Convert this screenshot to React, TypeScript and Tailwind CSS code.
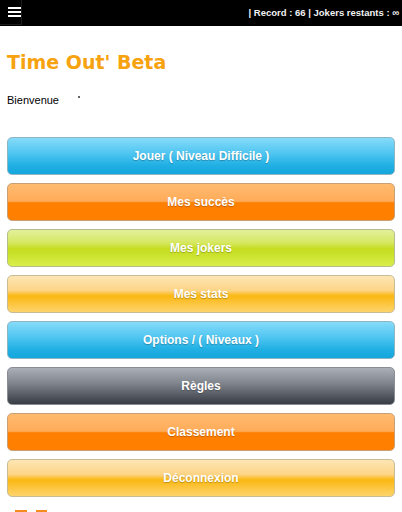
import React from 'react';

const BUTTONS = [
  { label: 'Jouer ( Niveau Difficile )', style: 'bg-[linear-gradient(to_bottom,#86dbf9_0%,#4cc4f0_45%,#22b0e4_75%,#14a6dc_100%)] border-[#8fb4c4]' },
  { label: 'Mes succès', style: 'bg-[linear-gradient(to_bottom,#ffbb70_0%,#ffab58_48%,#ff8000_52%,#ff7f00_100%)] border-[#c8a078]' },
  { label: 'Mes jokers', style: 'bg-[linear-gradient(to_bottom,#e3f09c_0%,#d6e862_35%,#c6dd22_52%,#cbe22e_70%,#d9ef4c_100%)] border-[#b4bc90]' },
  { label: 'Mes stats', style: 'bg-[linear-gradient(to_bottom,#fde6b4_0%,#fdd486_40%,#fab812_55%,#fcc43a_75%,#fdd46c_100%)] border-[#c8bc98]' },
  { label: 'Options / ( Niveaux )', style: 'bg-[linear-gradient(to_bottom,#86dbf9_0%,#4cc4f0_45%,#22b0e4_75%,#14a6dc_100%)] border-[#8fb4c4]' },
  { label: 'Règles', style: 'bg-[linear-gradient(to_bottom,#abafb7_0%,#7d828a_45%,#50555d_80%,#393e46_100%)] border-[#8a8e94]' },
  { label: 'Classement', style: 'bg-[linear-gradient(to_bottom,#ffbb70_0%,#ffab58_48%,#ff8000_52%,#ff7f00_100%)] border-[#c8a078]' },
  { label: 'Déconnexion', style: 'bg-[linear-gradient(to_bottom,#fde6b4_0%,#fdd486_40%,#fab812_55%,#fcc43a_75%,#fdd46c_100%)] border-[#c8bc98]' },
];

export default function App() {
  return (
    <div className="w-[402px] h-[512px] overflow-hidden bg-white font-['Liberation_Sans',Arial,sans-serif]">
      {/* Top bar */}
      <div className="h-[26px] bg-black flex items-center justify-between">
        <div className="w-[22px] h-[25px] self-start border-r border-b border-[#1c1c1c] flex flex-col justify-center gap-[2px] pl-[8px]">
          <div className="w-[13px] h-[2px] bg-white" />
          <div className="w-[13px] h-[2px] bg-white" />
          <div className="w-[13px] h-[2px] bg-white" />
        </div>
        <div className="pr-[3px] text-[9.5px] font-bold text-[#f2f2f2] whitespace-nowrap">
          | Record : 66 | Jokers restants : ∞
        </div>
      </div>

      <div className="px-[7px]">
        <h1 className="mt-[25px] text-[19px] leading-[22px] font-bold text-[#f7a20f] font-['DejaVu_Sans',sans-serif]">
          Time Out' Beta
        </h1>

        <div className="mt-[21px] flex items-start leading-[13px]">
          <span className="text-[11px] text-black">Bienvenue</span>
          <span className="ml-[19px] mt-[2px] w-[2px] h-[2px] bg-[#666]" />
        </div>

        <div className="mt-[30px] flex flex-col gap-[8px]">
          {BUTTONS.map((b) => (
            <button
              key={b.label}
              className={`h-[38px] w-[388px] rounded-[5px] border flex items-center justify-center text-white text-[12px] font-bold [text-shadow:0_1px_1px_rgba(0,0,0,0.25)] ${b.style}`}
            >
              {b.label}
            </button>
          ))}
        </div>

        <div className="mt-[13px] ml-[8px] flex gap-[9px]">
          <div className="w-[12px] h-[12px] bg-[#f58a1e]" />
          <div className="w-[11px] h-[12px] bg-[#f58a1e]" />
        </div>
      </div>
    </div>
  );
}
